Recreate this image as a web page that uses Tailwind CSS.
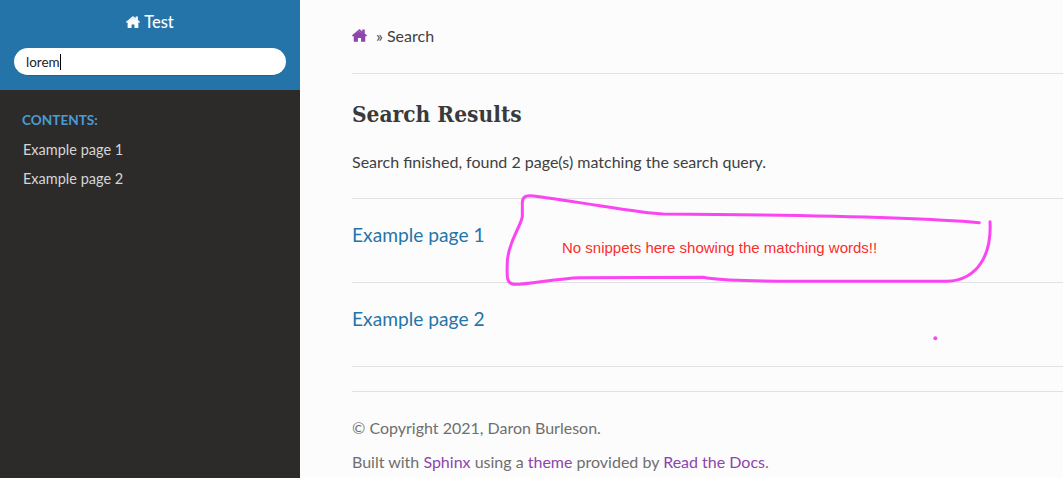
<!DOCTYPE html>
<html lang="en">
<head>
    <meta charset="UTF-8">
    <title>Search</title>
    <script src="https://cdn.jsdelivr.net/npm/@tailwindcss/browser@4"></script>
</head>
<body class="bg-[#fcfcfc] font-['Lato','Noto_Sans',sans-serif] overflow-hidden">
    <div class="relative flex w-[1063px] h-[478px] overflow-hidden">
        <!-- Sidebar -->
        <nav class="w-[300px] shrink-0 bg-[#2d2b2a]">
            <div class="h-[90px] bg-[#2574a9] flex flex-col items-center pt-[13px]">
                <a class="flex items-center gap-[4px] text-white text-[16.500px] font-medium leading-[19px]">
                    <svg class="w-[14px] h-[13px] fill-white" viewBox="0 0 24 22"><path d="M12 3.2 2.9 10.7a.6.6 0 0 1-.1.1v8.6c0 .5.4.9.9.9h5.800v-6h5v6h5.800c.5 0 .9-.4.9-.9v-8.600l-.1-.1zM23.800 9.700 20.400 6.800V1c0-.3-.2-.5-.5-.5H17c-.3 0-.5.2-.5.5v2.700L12.900.5c-.5-.4-1.300-.4-1.800 0L.2 9.700c-.2.1-.2.500 0 .7l.9 1.100c.1.100.2.200.3.200s.3 0 .4-.1L12 2.900l10.200 8.700c.1.100.2.100.3.100s.3-.1.400-.2l.9-1.100c.2-.200.2-.500 0-.700z"/></svg>
                    <span>Test</span>
                </a>
                <div class="mt-[16px] w-[272px] h-[28px] bg-white rounded-full flex items-center pl-[12px] pt-[1px] text-[13.500px] text-[#222] border-b border-[#1d6391]">
                    <span>lorem</span><span class="w-px h-[16px] bg-black"></span>
                </div>
            </div>
            <div class="pt-[21px] pl-[22px]">
                <p class="text-[#4b9bd3] text-[13.600px] font-bold leading-[19px]">CONTENTS:</p>
                <ul class="mt-[5px] pl-px text-[#d5d5d5] text-[14.500px]">
                    <li class="h-[29px] leading-[29px]">Example page 1</li>
                    <li class="h-[29px] leading-[29px]">Example page 2</li>
                </ul>
            </div>
        </nav>

        <!-- Main content -->
        <main class="flex-1 pl-[52px] text-[#404040]">
            <div class="h-[74px] border-b border-[#e1e1e1] flex items-center gap-[9px] pb-[2px] text-[16px]">
                <svg class="w-[15px] h-[14px] mt-[1px] fill-[#8e44ad]" viewBox="0 0 24 22"><path d="M12 3.2 2.900 10.700a.6.6 0 0 1-.1.100v8.600c0 .5.4.9.9.9h5.800v-6h5v6h5.800c.5 0 .9-.4.9-.9v-8.600l-.1-.1zM23.800 9.700 20.400 6.800V1c0-.3-.2-.5-.5-.5H17c-.3 0-.5.2-.5.5v2.700L12.900.5c-.5-.4-1.300-.4-1.800 0L.2 9.700c-.2.100-.2.500 0 .7l.9 1.100c.1.100.2.200.3.200s.3 0 .4-.1L12 2.900l10.200 8.700c.1.100.2.100.3.100s.3-.1.400-.2l.9-1.100c.2-.2.2-.5 0-.7z"/></svg>
                <span>» Search</span>
            </div>
            <h1 class="mt-[24px] font-['DejaVu_Serif',serif] font-stretch-condensed font-bold text-[22.500px] leading-[33px] text-[#3a3a3a]">Search Results</h1>
            <p class="mt-[19px] text-[16px] leading-[24px]">Search finished, found 2 page(s) matching the search query.</p>
            <div class="mt-[24px] border-t border-[#e1e1e1]">
                <div class="h-[84px] border-b border-[#e1e1e1] flex items-center pb-[10px] text-[19.200px] text-[#2574a9]">Example page 1</div>
                <div class="h-[84px] border-b border-[#e1e1e1] flex items-center pb-[10px] text-[19.200px] text-[#2574a9]">Example page 2</div>
            </div>
            <footer class="mt-[24px] border-t border-[#e1e1e1] text-[16px] text-[#6f6f6f]">
                <p class="mt-[24px] leading-[24px]">© Copyright 2021, Daron Burleson.</p>
                <p class="mt-[10px] leading-[24px]">Built with <a class="text-[#8e44ad]">Sphinx</a> using a <a class="text-[#8e44ad]">theme</a> provided by <a class="text-[#8e44ad]">Read the Docs</a>.</p>
            </footer>
        </main>

        <!-- Hand-drawn annotation over the page -->
        <svg class="absolute left-[490px] top-[185px] w-[520px] h-[165px]" viewBox="0 0 1560 495" fill="none">
            <path d="M1468 113C1300 98 1000 90 520 87C450 85 300 55 130 33C100 30 96 40 97 60L97 95C90 130 55 170 52 230C50 280 50 298 75 298C120 298 200 280 270 278L640 277C700 290 800 289 1370 289C1470 285 1505 200 1500 110" stroke="#fb45f2" stroke-width="9" stroke-linecap="round" stroke-linejoin="round"/>
            <circle cx="1336" cy="460" r="6" fill="#fb45f2"/>
        </svg>
        <span class="absolute left-[562px] top-[239px] font-['Liberation_Sans',sans-serif] text-[15px] leading-[18px] text-[#fb2d2d] whitespace-nowrap">No snippets here showing the matching words!!</span>
    </div>
</body>
</html>
